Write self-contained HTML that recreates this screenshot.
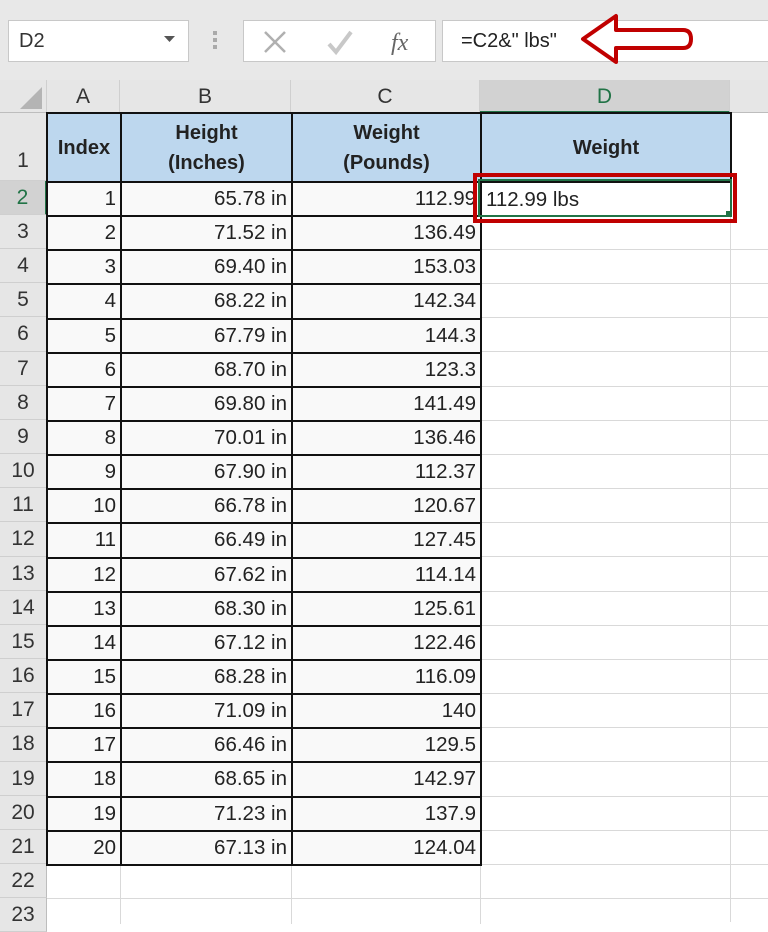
<!DOCTYPE html>
<html><head><meta charset="utf-8"><style>
*{margin:0;padding:0;box-sizing:border-box}
body{width:768px;height:922px;overflow:hidden;background:#fff;font-family:"Liberation Sans",sans-serif;position:relative;color:#222}
.tb{position:absolute;left:0;top:0;width:768px;height:80px;background:#e8e8e8}
.box{position:absolute;background:#fff;border:1px solid #c8c8c8}
.ch{position:absolute;top:80px;height:33px;background:#e6e6e6;border-right:1px solid #cfcfcf;border-bottom:1px solid #bdbdbd;text-align:center;font-size:21px;line-height:33px;color:#333}
.rh{position:absolute;left:0;width:47px;background:#e6e6e6;border-bottom:1px solid #cfcfcf;border-right:1px solid #bdbdbd;text-align:center;font-size:21px;color:#333}
table{position:absolute;left:46px;top:112px;border-collapse:collapse;font-size:20.5px}
td{border:2px solid #111;background:#f9f9f9;text-align:right;padding:0 4px;height:34.15px;line-height:30px;white-space:nowrap}
tr.h td{background:#bdd7ee;text-align:center;font-weight:bold;height:69px;line-height:30px;font-size:20px}
.vg{position:absolute;top:113px;width:1px;height:809px;background:#d9d9d9}
.hg{position:absolute;left:480px;width:288px;height:1px;background:#d9d9d9}
</style></head><body>
<div class="tb"></div>
<div class="box" style="left:8px;top:20px;width:181px;height:42px;font-size:20px;line-height:40px;padding-left:10px;color:#333">D2</div>
<svg style="position:absolute;left:164px;top:36px" width="12" height="8"><path d="M0 0 L11 0 L5.5 6 Z" fill="#555"/></svg>
<div style="position:absolute;left:213px;top:31px;width:4px;height:4px;background:#aaa;box-shadow:0 7px #aaa,0 14px #aaa"></div>
<div class="box" style="left:243px;top:20px;width:193px;height:42px"></div>
<svg style="position:absolute;left:243px;top:20px" width="193" height="42">
<path d="M22 12 L42 32 M42 12 L22 32" stroke="#b0b0b0" stroke-width="2.5" fill="none"/>
<path d="M86 24 L93 32 L108 12" stroke="#c8c8c8" stroke-width="4" fill="none"/>
<text x="148" y="30" font-family="Liberation Serif" font-style="italic" font-size="24" fill="#666">fx</text>
</svg>
<div class="box" style="left:442px;top:20px;width:340px;height:42px;font-size:20px;line-height:40px;padding-left:18px;color:#222">=C2&amp;" lbs"</div>
<svg style="position:absolute;left:575px;top:10px" width="125" height="60">
<path d="M8 29 L41 6 L41 20 L108 20 Q116 20 116 29 Q116 38 108 38 L41 38 L41 52 Z" fill="#fff" stroke="#c00000" stroke-width="4" stroke-linejoin="round"/>
</svg>
<div class="ch" style="left:0;width:47px"><svg width="46" height="33"><path d="M20 29 L42 29 L42 7 Z" fill="#b4b4b4"/></svg></div>
<div class="ch" style="left:47px;width:73px">A</div>
<div class="ch" style="left:120px;width:171px">B</div>
<div class="ch" style="left:291px;width:189px">C</div>
<div class="ch" style="left:480px;width:250px;background:#d2d2d2;color:#217346;border-bottom:2px solid #217346">D</div>
<div class="ch" style="left:730px;width:38px;border-right:none"></div>
<div class="vg" style="left:730px"></div>
<div class="vg" style="left:120px;top:864px;height:60px"></div>
<div class="vg" style="left:291px;top:864px;height:60px"></div>
<div class="vg" style="left:480px;top:864px;height:60px"></div>
<div class="hg" style="top:249px"></div><div class="hg" style="top:283px"></div><div class="hg" style="top:317px"></div><div class="hg" style="top:351px"></div><div class="hg" style="top:386px"></div><div class="hg" style="top:420px"></div><div class="hg" style="top:454px"></div><div class="hg" style="top:488px"></div><div class="hg" style="top:522px"></div><div class="hg" style="top:556px"></div><div class="hg" style="top:591px"></div><div class="hg" style="top:625px"></div><div class="hg" style="top:659px"></div><div class="hg" style="top:693px"></div><div class="hg" style="top:727px"></div><div class="hg" style="top:761px"></div><div class="hg" style="top:796px"></div><div class="hg" style="top:830px"></div><div class="hg" style="top:864px;left:46px;width:722px"></div><div class="hg" style="top:898px;left:46px;width:722px"></div>
<div class="rh" style="top:113px;height:68px;line-height:96px">1</div>
<div class="rh" style="top:181px;height:34px;line-height:34px;background:#d2d2d2;color:#217346;border-right:2px solid #217346">2</div>
<div class="rh" style="top:215px;height:34px;line-height:34px">3</div>
<div class="rh" style="top:249px;height:34px;line-height:34px">4</div>
<div class="rh" style="top:283px;height:34px;line-height:34px">5</div>
<div class="rh" style="top:317px;height:35px;line-height:34px">6</div>
<div class="rh" style="top:352px;height:34px;line-height:34px">7</div>
<div class="rh" style="top:386px;height:34px;line-height:34px">8</div>
<div class="rh" style="top:420px;height:34px;line-height:34px">9</div>
<div class="rh" style="top:454px;height:34px;line-height:34px">10</div>
<div class="rh" style="top:488px;height:34px;line-height:34px">11</div>
<div class="rh" style="top:522px;height:35px;line-height:34px">12</div>
<div class="rh" style="top:557px;height:34px;line-height:34px">13</div>
<div class="rh" style="top:591px;height:34px;line-height:34px">14</div>
<div class="rh" style="top:625px;height:34px;line-height:34px">15</div>
<div class="rh" style="top:659px;height:34px;line-height:34px">16</div>
<div class="rh" style="top:693px;height:34px;line-height:34px">17</div>
<div class="rh" style="top:727px;height:35px;line-height:34px">18</div>
<div class="rh" style="top:762px;height:34px;line-height:34px">19</div>
<div class="rh" style="top:796px;height:34px;line-height:34px">20</div>
<div class="rh" style="top:830px;height:34px;line-height:34px">21</div>
<div class="rh" style="top:864px;height:34px;line-height:34px">22</div>
<div class="rh" style="top:898px;height:34px;line-height:34px">23</div>
<table>
<colgroup><col style="width:74px"><col style="width:171px"><col style="width:189px"><col style="width:250px"></colgroup>
<tr class="h"><td style="vertical-align:middle">Index</td><td>Height<br>(Inches)</td><td>Weight<br>(Pounds)</td><td style="vertical-align:middle">Weight</td></tr>
<tr><td>1</td><td>65.78 in</td><td>112.99</td><td style="text-align:left;background:#fff;border:none;border-left:2px solid #111">112.99 lbs</td></tr>
<tr><td>2</td><td>71.52 in</td><td>136.49</td></tr>
<tr><td>3</td><td>69.40 in</td><td>153.03</td></tr>
<tr><td>4</td><td>68.22 in</td><td>142.34</td></tr>
<tr><td>5</td><td>67.79 in</td><td>144.3</td></tr>
<tr><td>6</td><td>68.70 in</td><td>123.3</td></tr>
<tr><td>7</td><td>69.80 in</td><td>141.49</td></tr>
<tr><td>8</td><td>70.01 in</td><td>136.46</td></tr>
<tr><td>9</td><td>67.90 in</td><td>112.37</td></tr>
<tr><td>10</td><td>66.78 in</td><td>120.67</td></tr>
<tr><td>11</td><td>66.49 in</td><td>127.45</td></tr>
<tr><td>12</td><td>67.62 in</td><td>114.14</td></tr>
<tr><td>13</td><td>68.30 in</td><td>125.61</td></tr>
<tr><td>14</td><td>67.12 in</td><td>122.46</td></tr>
<tr><td>15</td><td>68.28 in</td><td>116.09</td></tr>
<tr><td>16</td><td>71.09 in</td><td>140</td></tr>
<tr><td>17</td><td>66.46 in</td><td>129.5</td></tr>
<tr><td>18</td><td>68.65 in</td><td>142.97</td></tr>
<tr><td>19</td><td>71.23 in</td><td>137.9</td></tr>
<tr><td>20</td><td>67.13 in</td><td>124.04</td></tr>
</table>
<div style="position:absolute;left:478px;top:179px;width:254px;height:38px;border:2px solid #217346"></div>
<div style="position:absolute;left:726px;top:211px;width:6px;height:6px;background:#217346"></div>
<div style="position:absolute;left:473px;top:173px;width:264px;height:50px;border:4px solid #c00000"></div>
</body></html>
